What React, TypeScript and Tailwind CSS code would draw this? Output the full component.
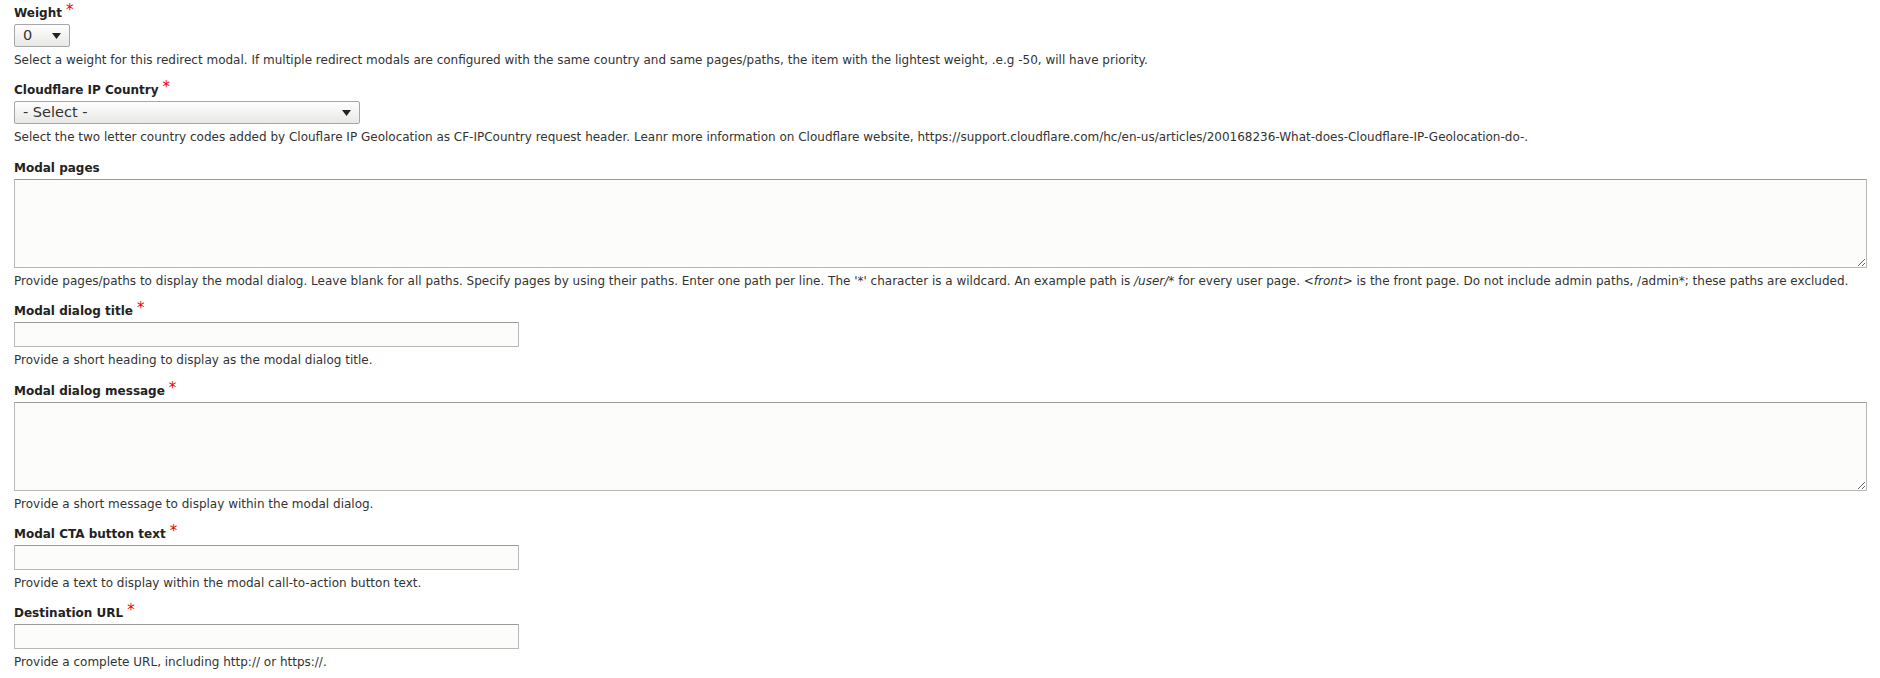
import type { ReactNode } from "react";

const font = { fontFamily: '"DejaVu Sans", Verdana, sans-serif' };

function Label({ children, required }: { children: ReactNode; required?: boolean }) {
  return (
    <label className="mb-[2px] block text-[12px] font-bold leading-[18px] text-[#222]">
      {children}
      {required ? (
        <span className="ml-[4px] inline-block align-top text-[15px] leading-[13px] font-normal text-[#e00]">*</span>
      ) : null}
    </label>
  );
}

function Description({ children }: { children: ReactNode }) {
  return <div className="mt-[4px] text-[12px] leading-[18px] text-[#333]">{children}</div>;
}

function Arrow() {
  return (
    <svg width="9" height="6" viewBox="0 0 9 6" className="shrink-0">
      <path d="M0 0h9L4.5 6z" fill="#222" />
    </svg>
  );
}

function SelectBox({ value, className }: { value: string; className: string }) {
  return (
    <div
      className={`flex h-[23px] items-center justify-between rounded-[2px] border border-[#a6a6a6] bg-gradient-to-b from-[#fefefe] to-[#e8e8e6] pl-[8px] pr-[8px] text-[14.5px] text-[#333] ${className}`}
    >
      <span>{value}</span>
      <Arrow />
    </div>
  );
}

function TextInput() {
  return (
    <input
      type="text"
      className="block h-[25px] w-[505px] rounded-[1px] border border-[#b8b8b8] border-t-[#999] bg-[#fcfcfa] px-[4px] text-[13px] outline-none"
    />
  );
}

function TextArea() {
  return (
    <textarea className="block h-[89px] w-full resize-y rounded-[1px] border border-[#b8b8b8] border-t-[#999] bg-[#fcfcfa] p-[4px] text-[13px] outline-none" />
  );
}

function Item({ children }: { children: ReactNode }) {
  return <div className="mb-[12.4px]">{children}</div>;
}

export default function App() {
  return (
    <div className="min-h-[678px] bg-white pl-[14px] pr-[13px] pt-[4px]" style={font}>
      <Item>
        <Label required>Weight</Label>
        <SelectBox value="0" className="w-[56px]" />
        <Description>
          Select a weight for this redirect modal. If multiple redirect modals are configured with the same country and same
          pages/paths, the item with the lightest weight, .e.g -50, will have priority.
        </Description>
      </Item>

      <Item>
        <Label required>Cloudflare IP Country</Label>
        <SelectBox value="- Select -" className="w-[346px]" />
        <Description>
          Select the two letter country codes added by Clouflare IP Geolocation as CF-IPCountry request header. Leanr more
          information on Cloudflare website,
          https://support.cloudflare.com/hc/en-us/articles/200168236-What-does-Cloudflare-IP-Geolocation-do-.
        </Description>
      </Item>

      <Item>
        <Label>Modal pages</Label>
        <TextArea />
        <Description>
          Provide pages/paths to display the modal dialog. Leave blank for all paths. Specify pages by using their paths.
          Enter one path per line. The '*' character is a wildcard. An example path is <em>/user/*</em> for every user
          page. <em>&lt;front&gt;</em> is the front page. Do not include admin paths, /admin*; these paths are excluded.
        </Description>
      </Item>

      <Item>
        <Label required>Modal dialog title</Label>
        <TextInput />
        <Description>Provide a short heading to display as the modal dialog title.</Description>
      </Item>

      <Item>
        <Label required>Modal dialog message</Label>
        <TextArea />
        <Description>Provide a short message to display within the modal dialog.</Description>
      </Item>

      <Item>
        <Label required>Modal CTA button text</Label>
        <TextInput />
        <Description>Provide a text to display within the modal call-to-action button text.</Description>
      </Item>

      <Item>
        <Label required>Destination URL</Label>
        <TextInput />
        <Description>Provide a complete URL, including http:// or https://.</Description>
      </Item>
    </div>
  );
}
